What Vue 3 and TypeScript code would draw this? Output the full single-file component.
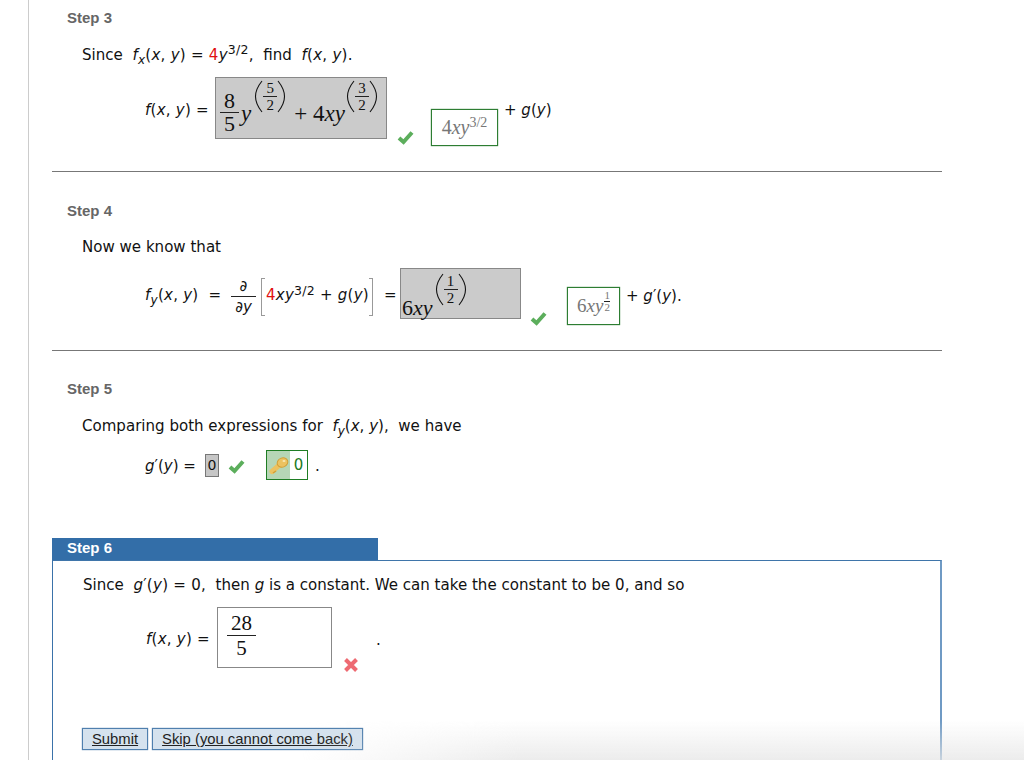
<script setup lang="ts">
const checkPath = 'M2 9 L6.5 13 L15 3.5'
</script>

<template>
  <div class="page">
    <div class="content">
      <section class="s3">
        <h3 class="label">Step 3</h3>
        <p class="prompt">Since&nbsp; <span class="m"><i>f<sub>x</sub></i>(<i>x</i>, <i>y</i>) = <span class="red">4</span><i>y</i><sup>3/2</sup>,</span>&nbsp; find&nbsp; <span class="m"><i>f</i>(<i>x</i>, <i>y</i>).</span></p>
        <div class="row r3">
          <span class="lhs lhs3 m"><i>f</i>(<i>x</i>, <i>y</i>) =</span>
          <div class="answer a3">
            <span class="frac big"><span class="num">8</span><span>5</span></span>
            <span class="yy"><i>y</i></span>
            <span class="exp">
              <svg class="paren" viewBox="0 0 9 33"><path d="M8 1 Q1.5 9 1.5 16.5 Q1.5 24 8 32" /></svg>
              <span class="frac small"><span class="num">5</span><span>2</span></span>
              <svg class="paren" viewBox="0 0 9 33"><path d="M1 1 Q7.5 9 7.5 16.5 Q7.5 24 1 32" /></svg>
            </span>
            <span class="plus">+ 4<i>xy</i></span>
            <span class="exp e3b">
              <svg class="paren" viewBox="0 0 9 33"><path d="M8 1 Q1.5 9 1.5 16.5 Q1.5 24 8 32" /></svg>
              <span class="frac small"><span class="num">3</span><span>2</span></span>
              <svg class="paren" viewBox="0 0 9 33"><path d="M1 1 Q7.5 9 7.5 16.5 Q7.5 24 1 32" /></svg>
            </span>
          </div>
          <svg class="check c3" viewBox="0 0 17 16"><path :d="checkPath" /></svg>
          <div class="key-box k3">4<i>xy</i><sup>3/2</sup></div>
          <span class="tail t3">+ <i>g</i>(<i>y</i>)</span>
        </div>
      </section>

      <section class="s4">
        <h3 class="label">Step 4</h3>
        <p class="prompt p4">Now we know that</p>
        <div class="row r4">
          <span class="lhs lhs4 m"><i>f<sub>y</sub></i>(<i>x</i>, <i>y</i>)&nbsp; =</span>
          <span class="frac deriv"><span class="num"><i>∂</i></span><span><i>∂y</i></span></span>
          <span class="bracket left"></span>
          <span class="expr m"><span class="red">4</span><i>xy</i><sup>3/2</sup> + <i>g</i>(<i>y</i>)</span>
          <span class="bracket right"></span>
          <span class="eq">=</span>
          <div class="answer a4">
            <span class="six">6<i>xy</i></span>
            <span class="exp e4">
              <svg class="paren" viewBox="0 0 9 33"><path d="M8 1 Q1.5 9 1.5 16.5 Q1.5 24 8 32" /></svg>
              <span class="frac small"><span class="num">1</span><span>2</span></span>
              <svg class="paren" viewBox="0 0 9 33"><path d="M1 1 Q7.5 9 7.5 16.5 Q7.5 24 1 32" /></svg>
            </span>
          </div>
          <svg class="check c4" viewBox="0 0 17 16"><path :d="checkPath" /></svg>
          <div class="key-box k4">6<i>xy</i><span class="frac tiny"><span class="num">1</span><span>2</span></span></div>
          <span class="tail t4">+ <i>g</i>′(<i>y</i>).</span>
        </div>
      </section>

      <section class="s5">
        <h3 class="label">Step 5</h3>
        <p class="prompt">Comparing both expressions for&nbsp; <i>f<sub>y</sub></i>(<i>x</i>, <i>y</i>),&nbsp; we have</p>
        <div class="row r5">
          <span class="lhs lhs5"><i>g</i>′(<i>y</i>) =</span>
          <span class="zero-box">0</span>
          <svg class="check c5" viewBox="0 0 17 16"><path :d="checkPath" /></svg>
          <div class="reveal">
            <span class="key-cell">
              <svg class="key" viewBox="0 0 20 19">
                <path d="M3 15.5 L11 8.5" stroke="#ecc260" stroke-width="5" stroke-linecap="round" />
                <path d="M4 17 L7 15" stroke="#d29f36" stroke-width="1.5" />
                <ellipse cx="13.5" cy="6.5" rx="5.5" ry="4.5" fill="#ecc260" stroke="#d29f36" transform="rotate(-25 13.5 6.5)" />
                <ellipse cx="15" cy="5" rx="1.5" ry="1" fill="#f8e8b4" />
              </svg>
            </span>
            <span class="reveal-val">0</span>
          </div>
          <span class="dot">.</span>
        </div>
      </section>

      <section class="s6">
        <h3 class="tab">Step 6</h3>
        <div class="active">
          <p class="prompt p6">Since&nbsp; <span class="m"><i>g</i>′(<i>y</i>) = 0,</span>&nbsp; then <i>g</i> is a constant. We can take the constant to be 0, and so</p>
          <div class="row r6">
            <span class="lhs lhs6 m"><i>f</i>(<i>x</i>, <i>y</i>) =</span>
            <div class="input-box">
              <span class="frac big b6"><span class="num">28</span><span>5</span></span>
            </div>
            <svg class="cross" viewBox="0 0 16 16"><path d="M2.5 2.5 L13.5 13.5 M13.5 2.5 L2.5 13.5" /></svg>
            <span class="dot d6">.</span>
          </div>
          <div class="buttons">
            <button class="btn" type="button">Submit</button>
            <button class="btn" type="button">Skip (you cannot come back)</button>
          </div>
        </div>
      </section>
    </div>
    <div class="shade"></div>
  </div>
</template>

<style>
html, body { margin: 0; background: #fff; overflow: hidden; }
</style>

<style scoped>
.page {
  position: relative;
  box-sizing: border-box;
  height: 760px;
  overflow: hidden;
  padding-left: 28px;
  font-family: "DejaVu Sans", Verdana, sans-serif;
  font-size: 15px;
  color: #111;
}
.content {
  box-sizing: border-box;
  height: 760px;
  width: 914px;
  border-left: 1px solid #ccc;
  padding-left: 23px;
}
section { width: 890px; box-sizing: border-box; }
.s3 { height: 172px; padding-top: 10px; border-bottom: 1px solid #777; }
.s4 { height: 179px; padding-top: 31px; border-bottom: 1px solid #777; }
.s5 { height: 187px; padding-top: 30px; }
.label {
  margin: 0 0 0 15px;
  font: bold 15px/16px "Liberation Sans", Arial, sans-serif;
  color: #666;
}
.prompt {
  margin: 20px 0 0 30px;
  line-height: 18px;
  white-space: nowrap;
  font-size: 15.05px;
}
.m { letter-spacing: 0.25px; }
.p4 { margin-top: 19px; }
.red { color: #e01010; }
sub { font-size: 12px; line-height: 0; vertical-align: -4px; }
sup { font-size: 12.5px; line-height: 0; vertical-align: 6px; }
.row { display: flex; align-items: flex-start; white-space: nowrap; }
.r3 { margin-top: 13px; padding-left: 93px; }
.r4 { margin-top: 12px; padding-left: 93px; }
.r5 { margin-top: 14px; padding-left: 93px; }
.lhs3 { margin-top: 24px; width: 70px; }
.answer {
  box-sizing: border-box;
  display: flex;
  align-items: flex-start;
  background: #cbcbcb;
  border: 1px solid #888;
  font-family: "Liberation Serif", "Times New Roman", serif;
  color: #111;
}
.a3 { width: 172px; height: 62px; padding: 0 0 0 4px; }
.frac { display: inline-flex; flex-direction: column; align-items: center; line-height: 1; }
.num { border-bottom: 1px solid #222; padding: 0 1px; align-self: stretch; text-align: center; }
.big { font-size: 21px; width: 19px; }
.a3 .big { margin-top: 12px; font-size: 22px; }
.a3 .big > span { line-height: 22px; }
.small { font-size: 15px; width: 14px; }
.small > span { line-height: 16px; }
.yy { margin: 24px 0 0 2px; font-size: 23px; line-height: 24px; }
.exp { display: inline-flex; align-items: center; height: 33px; margin: 2px 0 0 3px; }
.paren { width: 9px; height: 33px; fill: none; stroke: #111; stroke-width: 1.1; }
.plus { margin: 24px 0 0 8px; font-size: 23px; line-height: 24px; }
.e3b { margin-left: 1px; }
.check { width: 17px; height: 16px; fill: none; stroke: #5cae5c; stroke-width: 4; }
.c3 { margin: 52px 0 0 10px; }
.key-box {
  box-sizing: border-box;
  border: 1px solid #2d7d32;
  box-shadow: 0 0 1px #2d7d32;
  font-family: "Liberation Serif", "Times New Roman", serif;
  color: #777;
  display: flex;
  align-items: center;
  justify-content: center;
  font-size: 20px;
}
.key-box sup { font-size: 14px; vertical-align: 0; margin-top: -9px; }
.k3 { width: 67px; height: 37px; margin: 32px 0 0 17px; }
.tail { margin-left: 6px; }
.t3 { margin-top: 24px; }

.lhs4 { margin-top: 18px; width: 86px; }
.deriv { margin-top: 8px; font-family: "DejaVu Sans", sans-serif; font-size: 15px; width: 25px; }
.deriv > span { line-height: 20px; }
.deriv .num { padding: 0; }
.bracket { box-sizing: border-box; width: 4px; height: 38px; margin-top: 10px; border: 1px solid #999; }
.bracket.left { border-right: 0; margin-left: 5px; }
.bracket.right { border-left: 0; }
.expr { margin: 18px 0 0 1px; width: 103px; }
.expr sup { vertical-align: 5px; }
.eq { margin: 18px 0 0 11px; width: 13px; }
.a4 { width: 121px; height: 51px; margin-left: 3px; padding: 0 0 0 1px; }
.six { margin-top: 27px; font-size: 22px; line-height: 24px; }
.e4 { margin: 4px 0 0 2px; }
.c4 { margin: 42px 0 0 9px; }
.k4 { width: 53px; height: 38px; margin: 19px 0 0 20px; font-size: 19px; }
.tiny { font-size: 11px; margin: -9px 0 0 1px; }
.tiny .num { padding: 0; }
.t4 { margin: 19px 0 0 6px; }

.lhs5 { margin-top: 8px; width: 60px; }
.zero-box {
  box-sizing: border-box;
  width: 14px;
  height: 23px;
  margin-top: 5px;
  background: #c6c6c6;
  border: 1px solid #777;
  text-align: center;
  line-height: 21px;
  font-size: 14px;
}
.c5 { margin: 9px 0 0 9px; }
.reveal {
  box-sizing: border-box;
  display: flex;
  width: 42px;
  height: 30px;
  margin: 1px 0 0 21px;
  border: 1px solid #1f7d24;
}
.key-cell { width: 23px; background: #b6d6b6; display: flex; align-items: center; justify-content: center; }
.key { width: 20px; height: 19px; }
.reveal-val { flex: 1; text-align: center; line-height: 28px; color: #1c7a22; }
.dot { margin: 8px 0 0 7px; }

.s6 { padding-top: 0; }
.tab {
  box-sizing: border-box;
  margin: 0;
  width: 326px;
  height: 22px;
  padding-left: 15px;
  background: #336ea8;
  color: #fff;
  font: bold 15px/20px "Liberation Sans", Arial, sans-serif;
}
.active {
  box-sizing: border-box;
  height: 240px;
  border: 1px solid #5c8cbb;
  border-top-color: #3f75aa;
  border-right-width: 2px;
  border-right-color: #6f9ac4;
  border-left-color: #3a72a9;
}
.p6 { margin: 15px 0 0 30px; }
.r6 { margin-top: 13px; padding-left: 93px; }
.lhs6 { margin-top: 23px; width: 71px; }
.input-box {
  box-sizing: border-box;
  width: 115px;
  height: 61px;
  border: 1px solid #888;
  padding: 3px 0 0 9px;
  font-family: "Liberation Serif", "Times New Roman", serif;
  background: #fff;
}
.b6 { width: 29px; }
.b6 > span { line-height: 24px; }
.cross { width: 16px; height: 16px; margin: 50px 0 0 11px; fill: none; stroke: #ee6a72; stroke-width: 4; }
.d6 { margin: 24px 0 0 17px; }
.buttons { display: flex; gap: 4px; margin: 55px 0 0 29px; }
.btn {
  box-sizing: border-box;
  height: 22px;
  padding: 0 9px;
  background: #d5e2ee;
  border: 1px solid #4f7fae;
  box-shadow: 0 0 1px #4f7fae;
  font: 14.8px/18px "Liberation Sans", Arial, sans-serif;
  text-decoration: underline;
  color: #222;
}
.shade {
  position: absolute;
  left: 0;
  right: 0;
  bottom: 0;
  height: 40px;
  pointer-events: none;
  background: linear-gradient(to bottom, rgba(230, 230, 230, 0), rgba(230, 230, 230, 0.75));
  -webkit-mask-image: linear-gradient(to right, transparent 300px, #000 520px);
  mask-image: linear-gradient(to right, transparent 300px, #000 520px);
}
</style>
